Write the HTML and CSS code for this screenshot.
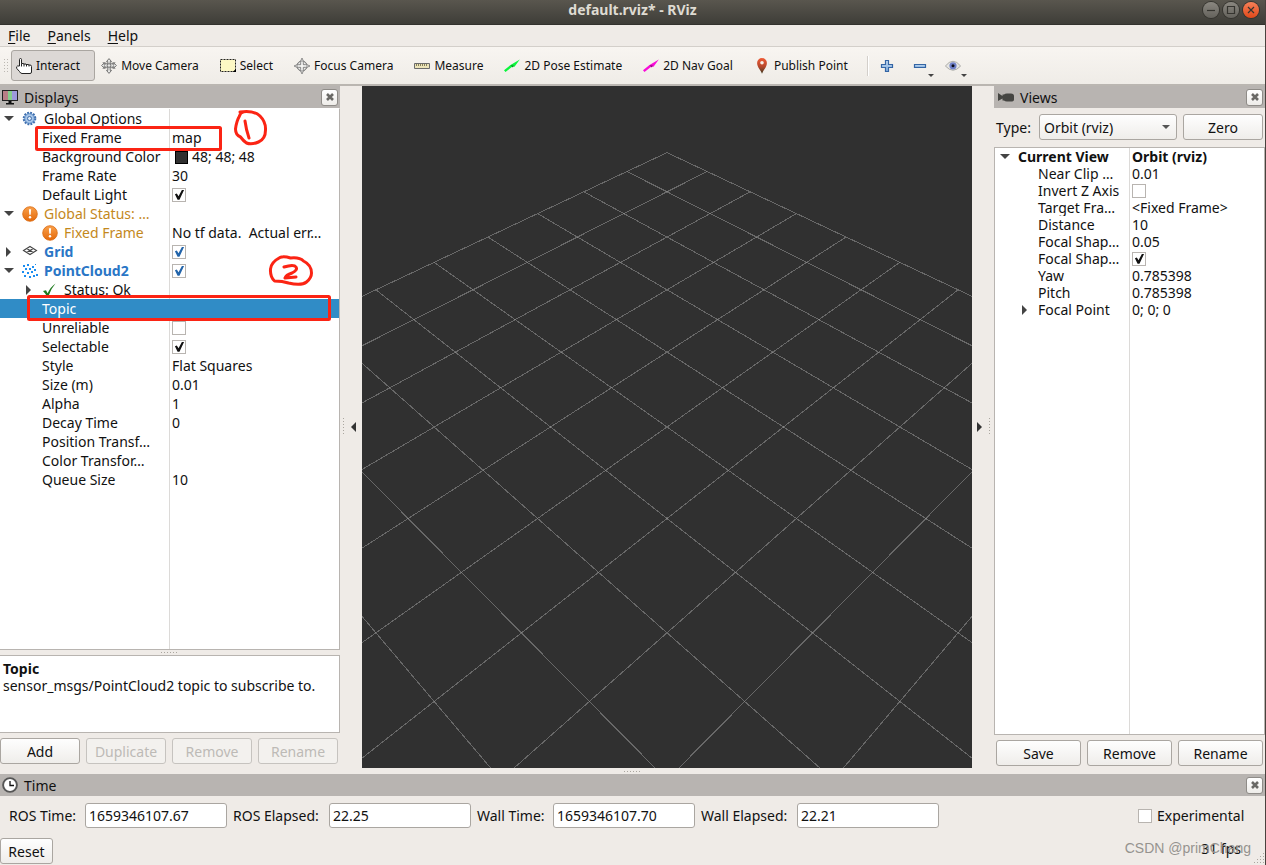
FILE: index.html
```html
<!DOCTYPE html>
<html lang="en">
<head>
<meta charset="utf-8">
<title>default.rviz* - RViz</title>
<link rel="stylesheet" href="styles.css">
</head>
<body>
<svg class="defs" aria-hidden="true">
  <defs>
    <linearGradient id="g-orange" x1="0" y1="0" x2="0" y2="1"><stop offset="0" stop-color="#f9a04a"/><stop offset="1" stop-color="#e4690a"/></linearGradient>
    <linearGradient id="g-pin" x1="0" y1="0" x2="0" y2="1"><stop offset="0" stop-color="#ee5a35"/><stop offset="0.55" stop-color="#b5472b"/><stop offset="1" stop-color="#3a3a20"/></linearGradient>
    <linearGradient id="g-blue" x1="0" y1="0" x2="0" y2="1"><stop offset="0" stop-color="#c6dcf2"/><stop offset="1" stop-color="#7fabdc"/></linearGradient>
    <symbol id="i-warn" viewBox="0 0 16 16"><circle cx="8" cy="8" r="7.3" fill="url(#g-orange)" stroke="#d9690f" stroke-width=".8"/><path d="M6.9 3.2h2.2l-.4 5.6H7.3z" fill="#fff"/><circle cx="8" cy="11.3" r="1.2" fill="#fff"/></symbol>
    <symbol id="i-x" viewBox="0 0 10 10"><path d="M2 2l6 6M8 2l-6 6" stroke="#6a6966" stroke-width="2.6"/></symbol>
  </defs>
</svg>

<header class="titlebar">
  <h1>default.rviz* - RViz</h1>
  <div class="window-controls">
    <button class="wc" aria-label="Minimize"><svg viewBox="0 0 16 16"><path d="M4 8.5h8" /></svg></button>
    <button class="wc" aria-label="Maximize"><svg viewBox="0 0 16 16"><path d="M4.5 4.5h7v7h-7z"/></svg></button>
    <button class="wc wc-close" aria-label="Close"><svg viewBox="0 0 16 16"><path d="M5 5l6 6M11 5l-6 6"/></svg></button>
  </div>
</header>

<nav class="menubar">
  <a href="#"><u>F</u>ile</a><a href="#"><u>P</u>anels</a><a href="#"><u>H</u>elp</a>
</nav>

<div class="toolbar">
  <span class="grip"></span>
  <button class="tool active"><svg viewBox="0 0 16 16"><path d="M3.500 8V1.500Q3.500 .5 4.500 .5t1 1V5.500h2v.5h2.500v.5h2.500v.5h1.500q1.500 0 1.500 1.500v5.500q0 1.500-1.500 1.500H6Q4.500 15.500 3.500 13.500L.8 10.500Q0 8.500 1.500 8z" fill="#fff" stroke="#222"/><path d="M5.500 5.500v3M8 6v2.500M10.500 6.500v2M13 7v1.500" stroke="#222" fill="none"/></svg>Interact</button>
  <button class="tool"><svg viewBox="0 0 16 16"><g fill="#e8e8e6" stroke="#666" stroke-width=".9"><path d="M8 .6l2.500 3H9.200v2.200h3.200V4.500l3 3-3 3V9.200H9.200v3.200h1.300L8 15.400l-2.500-3h1.300V9.200H3.600v1.300l-3-3 3-3v1.300h3.200V3.600H5.500z"/><path d="M2 4l3 7M14 4l-3 7M2 11l3-7M14 11l-3-7" stroke-dasharray="1 1"/><circle cx="8" cy="7.500" r="1.800"/></g></svg>Move Camera</button>
  <button class="tool"><svg viewBox="0 0 16 16"><path d="M.5 1.500h15v12H.5z" fill="#fdf8c4" stroke="#222" stroke-dasharray="2 1"/><path d="M16 11v3h-3.500z" fill="#000"/></svg>Select</button>
  <button class="tool"><svg viewBox="0 0 16 16"><circle cx="8" cy="8" r="5" fill="#ececea" stroke="#777"/><circle cx="8" cy="8" r="2.500" fill="none" stroke="#888"/><path d="M8 0l1.300 3v3.700H13l3 1.300-3 1.300H9.300V13L8 16l-1.300-3V9.300H3L0 8l3-1.300h3.700V3z" fill="#f4f4f2" stroke="#777" stroke-width=".8"/><circle cx="8" cy="8" r="5" fill="none" stroke="#888" stroke-width=".8"/></svg>Focus Camera</button>
  <button class="tool"><svg viewBox="0 0 16 16"><path d="M.5 5.500h15v5H.5z" fill="#ece4b8" stroke="#6b6b6b"/><path d="M2.500 6v2M4.500 6v2M6.500 6v2M8.500 6v2M10.500 6v2M12.500 6v2" stroke="#77704f" stroke-width=".9"/></svg>Measure</button>
  <button class="tool"><svg viewBox="0 0 16 16"><path d="M0 12.200L6.500 7 15.800 1.500 10.500 8.800 8.500 8.500l-7 5.500z" fill="#0cf53c"/><path d="M6.500 7.300l2.300 2.300 1-2z" fill="#078a22"/></svg>2D Pose Estimate</button>
  <button class="tool"><svg viewBox="0 0 16 16"><path d="M0 12.200L6.500 7 15.800 1.500 10.500 8.800 8.500 8.500l-7 5.500z" fill="#f80cd8"/><path d="M6.500 7.300l2.300 2.300 1-2z" fill="#8c0779"/></svg>2D Nav Goal</button>
  <button class="tool"><svg viewBox="0 0 16 16"><path d="M8 15.800C7 12 3.100 9.500 3.100 5a4.900 4.900 0 0 1 9.800 0C12.900 9.500 9 12 8 15.800z" fill="url(#g-pin)"/><circle cx="8" cy="4.700" r="1.800" fill="#f6efe9"/></svg>Publish Point</button>
  <span class="separator"></span>
  <button class="mini" aria-label="Add tool"><svg viewBox="0 0 16 16"><path d="M6.500 2.500h3v4h4v3h-4v4h-3v-4h-4v-3h4z" fill="url(#g-blue)" stroke="#3465a4" stroke-width="1.200"/></svg></button>
  <button class="mini has-menu" aria-label="Remove tool"><svg viewBox="0 0 16 16"><path d="M2.500 6.500h11v3h-11z" fill="url(#g-blue)" stroke="#3465a4" stroke-width="1.200"/></svg></button>
  <button class="mini has-menu" aria-label="Tool visibility"><svg viewBox="0 0 16 16"><path d="M.4 8Q8-1.500 15.600 8 8 16.500 .4 8z" fill="#e6e6e3" stroke="#a5a5a0" stroke-width=".9"/><circle cx="8" cy="7.800" r="3.600" fill="#6f80c8"/><circle cx="8" cy="7.800" r="1.500" fill="#0c0c18"/></svg></button>
</div>

<main class="workspace">
  <section class="dock displays">
    <div class="dock-title">
      <svg viewBox="0 0 16 16"><path d="M0 1h16v11H0z" fill="#222"/><path d="M1 2h5v9H1z" fill="#b97f86"/><path d="M6 2h4v9H6z" fill="#86cf8c"/><path d="M10 2h5v9h-5z" fill="#9d99dc"/><path d="M6.500 12h3v2H12v1.500H4V14h2.500z" fill="#111"/></svg>
      <h2>Displays</h2>
      <button class="close" aria-label="Close Displays"><svg><use href="#i-x"/></svg></button>
    </div>
    <div class="tree-box tree-left">
      <table class="tree">
        <colgroup><col class="name-col"><col></colgroup>
        <tr><td><div class="cell"><i class="exp open"></i><svg class="ic" viewBox="0 0 16 16"><circle cx="7.500" cy="7.500" r="5.700" fill="#a9c6e8" stroke="#3f6fae" stroke-width="2.200" stroke-dasharray="1.800 1.180"/><circle cx="7.500" cy="7.500" r="4.700" fill="#a9c6e8" stroke="#5f8ec7" stroke-width=".8"/><circle cx="7.500" cy="7.500" r="2" fill="#dfeaf6" stroke="#3f6fae"/></svg>Global Options</div></td><td></td></tr>
        <tr><td><div class="cell sub">Fixed Frame</div></td><td>map</td></tr>
        <tr><td><div class="cell sub">Background Color</div></td><td><span class="swatch"></span>48; 48; 48</td></tr>
        <tr><td><div class="cell sub">Frame Rate</div></td><td>30</td></tr>
        <tr><td><div class="cell sub">Default Light</div></td><td><input type="checkbox" class="check" aria-label="Default Light" checked></td></tr>
        <tr class="warn"><td><div class="cell"><i class="exp open"></i><svg class="ic"><use href="#i-warn"/></svg>Global Status: …</div></td><td></td></tr>
        <tr class="warn"><td><div class="cell sub"><svg class="ic"><use href="#i-warn"/></svg>Fixed Frame</div></td><td class="dark">No tf data.&nbsp; Actual err…</td></tr>
        <tr class="display"><td><div class="cell"><i class="exp"></i><svg class="ic" viewBox="0 0 16 16"><path d="M8 2.500L14.500 6.500l-6.500 4L1.500 6.500zM4.700 4.500l6.600 4M11.300 4.500l-6.600 4" fill="none" stroke="#444" stroke-width="1.100"/></svg>Grid</div></td><td><input type="checkbox" class="check blue" aria-label="Grid" checked></td></tr>
        <tr class="display"><td><div class="cell"><i class="exp open"></i><svg class="ic" viewBox="0 0 16 16"><path d="M1 2h2v2H1zM5 1h2v2H5zM10 3h2v2h-2zM3 5h2v2H3zM7 5h2v2H7zM12 6h2v2h-2zM0 8h2v2H0zM5 9h2v2H5zM9 8h2v2H9zM14 11h2v2h-2zM2 12h2v2H2zM7 13h2v2H7zM11 12h2v2h-2zM13 1h1v1h-1z" fill="#1c8df0"/></svg>PointCloud2</div></td><td><input type="checkbox" class="check blue" aria-label="PointCloud2" checked></td></tr>
        <tr><td><div class="cell lvl1"><i class="exp"></i><svg class="ic" viewBox="0 0 16 16"><path d="M1 9l3-.8 1.600 3Q8.500 5 13.500 1.500q-4.500 5-7 12.500H4.500Q3.500 11.500 1 9z" fill="#1e7a1e"/></svg>Status: Ok</div></td><td></td></tr>
        <tr class="selected"><td><div class="cell sub">Topic</div></td><td></td></tr>
        <tr><td><div class="cell sub">Unreliable</div></td><td><input type="checkbox" class="check" aria-label="Unreliable"></td></tr>
        <tr><td><div class="cell sub">Selectable</div></td><td><input type="checkbox" class="check" aria-label="Selectable" checked></td></tr>
        <tr><td><div class="cell sub">Style</div></td><td>Flat Squares</td></tr>
        <tr><td><div class="cell sub">Size (m)</div></td><td>0.01</td></tr>
        <tr><td><div class="cell sub">Alpha</div></td><td>1</td></tr>
        <tr><td><div class="cell sub">Decay Time</div></td><td>0</td></tr>
        <tr><td><div class="cell sub">Position Transf…</div></td><td></td></tr>
        <tr><td><div class="cell sub">Color Transfor…</div></td><td></td></tr>
        <tr><td><div class="cell sub">Queue Size</div></td><td>10</td></tr>
      </table>
    </div>
    <div class="splitter-h"><span class="dots-h"></span></div>
    <div class="help-box"><strong>Topic</strong><p>sensor_msgs/PointCloud2 topic to subscribe to.</p></div>
    <div class="button-row">
      <button class="btn">Add</button><button class="btn" disabled>Duplicate</button><button class="btn" disabled>Remove</button><button class="btn" disabled>Rename</button>
    </div>
    <svg class="markup" viewBox="0 0 340 250" aria-hidden="true">
      <g fill="none" stroke="#fb2414" stroke-width="3" stroke-linejoin="round" stroke-linecap="round">
        <rect x="36.500" y="41.500" width="184" height="22" rx="1"/>
        <rect x="28.500" y="210.500" width="301" height="23" rx="1"/>
        <path d="M240 26q14-2 20 4 6 6 5.500 14 0 9-7 12-7 3-12 1-3-2-6-6-5-2-5-8 1-8 4-13 1-4 4-4M245 35q1 8 4 17"/>
        <path d="M281 171q-10 5-10.500 12-.5 8 4 12 8 0 14 2 13 3 18-1 5-4 5-9 0-8-8-12-4-4-13-3-9-3-13 1M284 181q10-3 12 0 2 3-4 6-6 2-7 5l11-1"/>
      </g>
    </svg>
  </section>

  <div class="side-handle"><span class="dots-v"></span><i class="arrow-left"></i></div>

  <section class="viewport" aria-label="3D view">
    <svg viewBox="0 0 610 682" preserveAspectRatio="xMidYMid slice">
      <g id="rays" class="rays">
        <path d="M305 66.600L887.200 341M264.800 85.500L856.600 384.300M221.800 105.800L822.500 432.500M175.600 127.600L784.500 486.300M125.900 151L741.700 546.800M72.100 176.300L693.100 615.400M13.900 203.800L637.700 693.900M-49.400 233.600L573.700 784.300M-118.400 266.300L499.100 890M-194 301.800L410.900 1014.600M-277.200 341L305 1164.300"/>
      </g>
      <use href="#rays" transform="matrix(-1 0 0 1 610 0)"/>
    </svg>
  </section>

  <div class="side-handle right"><i class="arrow-right"></i><span class="dots-v"></span></div>

  <section class="dock views">
    <div class="dock-title">
      <svg viewBox="0 0 16 16"><path d="M0 4l4.500 3V5.500H6Q7 4.500 9 4.500h4q3 0 3 2.500v3.500q0 2-3 2H9q-2 0-3-1H4.500V9.500L0 12z" fill="#454542"/></svg>
      <h2>Views</h2>
      <button class="close" aria-label="Close Views"><svg><use href="#i-x"/></svg></button>
    </div>
    <div class="type-row">
      <label for="view-type">Type:</label>
      <span class="combo"><select id="view-type"><option>Orbit (rviz)</option></select></span>
      <button class="btn zero">Zero</button>
    </div>
    <div class="tree-box tree-right">
      <table class="tree">
        <colgroup><col class="name-col"><col></colgroup>
        <tr class="root"><td><div class="cell"><i class="exp open"></i>Current View</div></td><td>Orbit (rviz)</td></tr>
        <tr><td><div class="cell sub">Near Clip …</div></td><td>0.01</td></tr>
        <tr><td><div class="cell sub">Invert Z Axis</div></td><td><input type="checkbox" class="check" aria-label="Invert Z Axis"></td></tr>
        <tr><td><div class="cell sub">Target Fra…</div></td><td>&lt;Fixed Frame&gt;</td></tr>
        <tr><td><div class="cell sub">Distance</div></td><td>10</td></tr>
        <tr><td><div class="cell sub">Focal Shap…</div></td><td>0.05</td></tr>
        <tr><td><div class="cell sub">Focal Shap…</div></td><td><input type="checkbox" class="check" aria-label="Focal Shape Fixed Size" checked></td></tr>
        <tr><td><div class="cell sub">Yaw</div></td><td>0.785398</td></tr>
        <tr><td><div class="cell sub">Pitch</div></td><td>0.785398</td></tr>
        <tr><td><div class="cell lvl1"><i class="exp"></i>Focal Point</div></td><td>0; 0; 0</td></tr>
      </table>
    </div>
    <div class="button-row">
      <button class="btn">Save</button><button class="btn">Remove</button><button class="btn">Rename</button>
    </div>
  </section>
</main>

<div class="splitter-h wide"><span class="dots-h"></span></div>

<section class="time">
  <div class="dock-title">
    <svg viewBox="0 0 16 16"><circle cx="8" cy="8" r="6.900" fill="#fff" stroke="#555" stroke-width="1.900"/><path d="M8 4v4.500h4" fill="none" stroke="#111" stroke-width="1.300"/></svg>
    <h2>Time</h2>
    <button class="close" aria-label="Close Time"><svg><use href="#i-x"/></svg></button>
  </div>
  <div class="time-row">
    <label for="ros-time" class="short">ROS Time:</label><input id="ros-time" type="text" value="1659346107.67">
    <label for="ros-elapsed" class="long">ROS Elapsed:</label><input id="ros-elapsed" type="text" value="22.25">
    <label for="wall-time" class="short">Wall Time:</label><input id="wall-time" type="text" value="1659346107.70">
    <label for="wall-elapsed" class="long">Wall Elapsed:</label><input id="wall-elapsed" type="text" value="22.21">
    <label class="experimental"><input type="checkbox" class="check">Experimental</label>
  </div>
  <div class="status-row">
    <button class="btn reset">Reset</button>
    <span class="fps">31 fps</span>
    <span class="watermark">CSDN @primChang</span>
    <svg class="size-grip" viewBox="0 0 12 12"><path d="M10 0h1v1h-1zM7 3h1v1H7zM10 3h1v1h-1zM4 6h1v1H4zM7 6h1v1H7zM10 6h1v1h-1zM1 9h1v1H1zM4 9h1v1H4zM7 9h1v1H7zM10 9h1v1h-1z" fill="#aaa69f"/></svg>
  </div>
</section>
</body>
</html>
```
FILE: styles.css
```css
* { box-sizing: border-box; }

body {
  margin: 0;
  min-height: 100vh;
  display: flex;
  flex-direction: column;
  background: #efebe7;
  border-right: 1px solid #4a423e;
  color: #111;
  font: 14px/19px "Noto Sans", "Open Sans", sans-serif;
}

h1, h2, p { margin: 0; font-weight: normal; font-size: inherit; }
button, input, select { font: inherit; color: inherit; }
button { padding: 0; }
svg { display: block; flex: none; }
.defs { position: absolute; width: 0; height: 0; }

/* Title bar and menus */
.titlebar {
  height: 25px;
  display: grid;
  grid-template-columns: 1fr auto 1fr;
  padding-bottom: 5px;
  align-items: center;
  background: linear-gradient(#59564e, #3e3d38);
  border-bottom: 1px solid #33322e;
  color: #dfdbd2;
}
.titlebar h1 { grid-column: 2; font-weight: bold; }
.window-controls { display: flex; justify-content: flex-end; gap: 4px; padding-right: 6px; }
.wc {
  width: 16px;
  height: 16px;
  border: 0;
  border-radius: 50%;
  background: linear-gradient(#8a8780, #64625c);
  box-shadow: 0 0 0 1px #35342f;
}
.wc-close { background: linear-gradient(#f58058, #e2491a); }
.wc path { fill: none; stroke: #35342f; stroke-width: 1.2; }

.menubar { height: 22px; display: flex; gap: 17px; padding: 1px 8px; border-bottom: 1px solid #d3cfca; }
.menubar a { color: inherit; text-decoration: none; }
.menubar u { text-underline-offset: 2px; }

/* Toolbar */
.toolbar {
  height: 39px;
  display: flex;
  align-items: center;
  gap: 1px;
  background: linear-gradient(#f8f5f1, #efece7);
  border-bottom: 2px solid #bab6b1;
}
.grip { width: 6px; height: 16px; margin: 0 1px 0 3px; background: radial-gradient(circle, #bcb8b2 1px, transparent 1px) 0 0 / 3px 3px; }
.tool {
  height: 31px;
  display: flex;
  align-items: center;
  gap: 4px;
  padding: 0 14px 0 4px;
  border: 1px solid transparent;
  border-radius: 3px;
  background: none;
  font-size: 12px;
  white-space: nowrap;
}
.tool svg, .mini svg { width: 16px; height: 16px; }
.tool.active { background: #dcd8d5; border-color: #aaa6a1; }
.separator { width: 2px; height: 20px; margin: 0 5px 0 3px; border-left: 1px solid #d3cfca; border-right: 1px solid #fff; }
.mini { position: relative; width: 32px; height: 31px; display: grid; place-items: center start; padding-left: 4px; border: 0; background: none; }
.has-menu::after { content: ""; position: absolute; right: 6px; bottom: 4px; border: 3px solid transparent; border-top-color: #444; border-bottom: 0; }

/* Dock panels */
.workspace { flex: 1; display: flex; }
.dock { position: relative; display: flex; flex-direction: column; }
.displays { width: 340px; }
.views { width: 271px; }
.dock-title {
  height: 22px;
  display: flex;
  align-items: center;
  gap: 6px;
  padding: 0 2px;
  background: #b8b4b1;
}
.views .dock-title { padding-left: 4px; }
.dock-title > svg { width: 16px; height: 16px; }
.dock-title h2 { flex: 1; }
.close {
  width: 17px;
  height: 17px;
  display: grid;
  place-items: center;
  border: 1px solid #8f8c88;
  border-radius: 3px;
  background: linear-gradient(#fff, #eeece9);
}
.close svg { width: 10px; height: 10px; }

/* Property trees */
.tree-box { flex: 1; border: 1px solid #b8b4b0; --split: 169px; background: linear-gradient(#dcdad8, #dcdad8) var(--split) 0 / 1px 100% no-repeat #fff; }
.tree-left { border-left: 0; border-top-color: #fff; }
.tree-right { --split: 134px; line-height: 17px; }
.tree { width: 100%; table-layout: fixed; border-collapse: collapse; }
.name-col { width: calc(var(--split) + 1px); }
.tree td { height: 19px; padding: 0 0 0 2px; white-space: nowrap; overflow: hidden; }
.tree td:first-child { padding: 0; }
.tree-right .tree td { height: 17px; }
.cell { display: flex; align-items: center; gap: 6px; padding-left: 1px; }
.tree-right .cell { padding-left: 2px; }
.cell.lvl1 { padding-left: 21px; }
.cell.sub { padding-left: 42px; }
.tree-right .cell.lvl1 { padding-left: 22px; }
.tree-right .cell.sub { padding-left: 43px; }
.exp { width: 15px; height: 15px; display: grid; place-items: center; }
.exp::before { content: ""; border: 5px solid transparent; border-left-color: #444; border-right: 0; }
.exp.open::before { border: 5px solid transparent; border-top-color: #444; border-bottom: 0; }
.ic { width: 16px; height: 16px; }
.warn { color: #c4881c; }
.dark { color: #111; }
.display { color: #2a76c6; font-weight: bold; }
.root { font-weight: bold; }
.selected { background: #308cc6; color: #fff; }
.swatch { display: inline-block; width: 13px; height: 13px; margin: 0 4px 0 3px; background: #303030; border: 1px solid #000; vertical-align: -2px; }
.check {
  appearance: none;
  display: block;
  width: 14px;
  height: 14px;
  margin: 0;
  border: 1px solid #b8b4b0;
  background: #fff;
}
.check:checked::before {
  content: "";
  display: block;
  width: 12px;
  height: 12px;
  background: #111;
  clip-path: polygon(16% 48%, 32% 42%, 46% 64%, 74% 12%, 92% 12%, 54% 94%, 38% 94%);
}
.check.blue:checked::before { background: #2264aa; }

.splitter-h { height: 5px; display: grid; place-items: center; }
.dots-h { width: 18px; height: 1px; background: repeating-linear-gradient(90deg, #aaa69f 0 1px, transparent 1px 3px); }
.splitter-h.wide { height: 6px; }
.help-box { height: 78px; padding: 4px 3px; border: 1px solid #b8b4b0; border-left: 0; background: #fff; line-height: 17px; }
.help-box p { white-space: nowrap; }

.button-row { display: flex; gap: 6px; padding: 5px 2px 4px 0; }
.views .button-row { padding: 5px 2px 2px; }
.button-row .btn { flex: 1; }
.btn {
  height: 26px;
  border: 1px solid #aaa6a1;
  border-radius: 3px;
  background: linear-gradient(#fefefe, #efedea);
}
.btn:disabled { color: #bdbab6; border-color: #c6c3bf; background: #f3f1ee; }

.markup { position: absolute; left: 0; top: 0; width: 340px; height: 250px; pointer-events: none; }

/* Dock collapse handles */
.side-handle { width: 22px; display: flex; align-items: center; gap: 7px; padding-left: 3px; }
.side-handle.right { padding-left: 5px; }
.dots-v { width: 1px; height: 18px; background: repeating-linear-gradient(#aaa69f 0 1px, transparent 1px 3px); }
.arrow-left, .arrow-right { border: 5px solid transparent; }
.arrow-left { border-right-color: #333; border-left: 0; }
.arrow-right { border-left-color: #333; border-right: 0; }

/* 3D view */
.viewport { flex: 1; position: relative; min-width: 0; overflow: hidden; background: #303030; }
.viewport svg { position: absolute; inset: 0; width: 100%; height: 100%; }
.rays { fill: none; stroke: rgba(160, 160, 160, 0.5); shape-rendering: crispEdges; }

/* Views panel */
.type-row { display: flex; align-items: center; gap: 6px; padding: 6px 2px 7px; }
.type-row label { width: 37px; }
.combo { flex: 1; position: relative; }
.combo select {
  appearance: none;
  display: block;
  width: 100%;
  height: 26px;
  padding: 0 4px;
  border: 1px solid #aaa6a1;
  border-radius: 3px;
  background: linear-gradient(#fefefe, #efedea);
}
.combo::after { content: ""; position: absolute; right: 7px; top: 11px; border: 4px solid transparent; border-top-color: #555; border-bottom: 0; }
.zero { width: 80px; }

/* Time panel */
.time-row { display: flex; align-items: center; gap: 6px; padding: 7px 17px 0 9px; }
.short { width: 70px; }
.long { width: 90px; }
.time-row input[type="text"] { width: 142px; height: 25px; padding: 0 3px; border: 1px solid #aaa6a1; border-radius: 3px; background: #fff; }
.experimental { width: 110px; display: flex; align-items: center; gap: 5px; margin-left: auto; }
.status-row { position: relative; display: flex; align-items: center; justify-content: space-between; padding: 10px 24px 1px 0; }
.reset { width: 53px; }
.fps { padding-bottom: 6px; }
.watermark { position: absolute; right: 14px; bottom: 7px; color: #96938f; font: 14px/19px "Liberation Sans", sans-serif; }
.size-grip { position: absolute; right: 0; bottom: 0; width: 12px; height: 12px; }
```
